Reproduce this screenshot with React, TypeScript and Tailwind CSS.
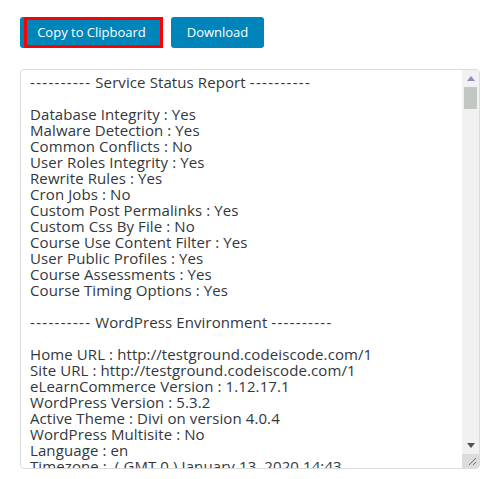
const statusLines = [
  "---------- Service Status Report ----------",
  "",
  "Database Integrity : Yes",
  "Malware Detection : Yes",
  "Common Conflicts : No",
  "User Roles Integrity : Yes",
  "Rewrite Rules : Yes",
  "Cron Jobs : No",
  "Custom Post Permalinks : Yes",
  "Custom Css By File : No",
  "Course Use Content Filter : Yes",
  "User Public Profiles : Yes",
  "Course Assessments : Yes",
  "Course Timing Options : Yes",
  "",
  "---------- WordPress Environment ----------",
  "",
  "Home URL : http://testground.codeiscode.com/1",
  "Site URL : http://testground.codeiscode.com/1",
  "eLearnCommerce Version : 1.12.17.1",
  "WordPress Version : 5.3.2",
  "Active Theme : Divi on version 4.0.4",
  "WordPress Multisite : No",
  "Language : en",
  "Timezone :  ( GMT 0 ) January 13, 2020 14:43",
  "",
];

// dash runs are wider in the original font, so space them out a bit
const renderLine = (line: string) =>
  line.split(/(-{3,})/).map((part, i) =>
    /^-{3,}$/.test(part) ? (
      <span key={i} className="tracking-[1.3px]">
        {part}
      </span>
    ) : (
      <span key={i}>{part}</span>
    )
  );

export default function App() {
  return (
    <div
      className="min-h-screen bg-white px-5 pt-[17px]"
      style={{ fontFamily: '"Open Sans", "Noto Sans", sans-serif' }}
    >
      <div className="flex gap-2">
        <button className="relative h-[31px] w-[143px] rounded-[3px] bg-[#0085ba] text-[13px] text-white">
          Copy to Clipboard
          <span className="absolute bottom-0 left-1 right-0 top-0 border-[3px] border-[#ff0000]" />
        </button>
        <button className="h-[31px] w-[93px] rounded-[3px] bg-[#0085ba] text-[13px] text-white">
          Download
        </button>
      </div>

      <div className="mt-[21px] flex h-[400px] w-[460px] overflow-hidden rounded-[4px] border border-[#dcdcdc]">
        <div className="flex-1 overflow-hidden pl-[9px] pt-[4px] text-[15px] leading-4 tracking-[0.1px] text-[#32373c] whitespace-pre">
          {statusLines.map((line, i) => (
            <div key={i} className="h-4">
              {renderLine(line)}
            </div>
          ))}
        </div>

        <div className="flex w-[17px] flex-col bg-[#f1f1f1]">
          <div className="flex h-[17px] items-center justify-center">
            <svg width="8" height="5" viewBox="0 0 8 5">
              <path d="M4 0 L8 5 L0 5 Z" fill="#8e89c4" />
            </svg>
          </div>
          <div className="mx-[2px] h-[22px] bg-[#c1c7c1]" />
          <div className="flex-1" />
          <div className="flex h-[17px] items-center justify-center">
            <svg width="8" height="5" viewBox="0 0 8 5">
              <path d="M0 0 L8 0 L4 5 Z" fill="#505050" />
            </svg>
          </div>
          <div className="flex h-[14px] items-end justify-end bg-[#dcdcdc] pb-[2px] pr-[2px]">
            <svg width="9" height="9" viewBox="0 0 9 9">
              <path d="M8 1 L1 8 M8 5 L5 8" stroke="#6b6b6b" strokeWidth="1" />
            </svg>
          </div>
        </div>
      </div>
    </div>
  );
}
